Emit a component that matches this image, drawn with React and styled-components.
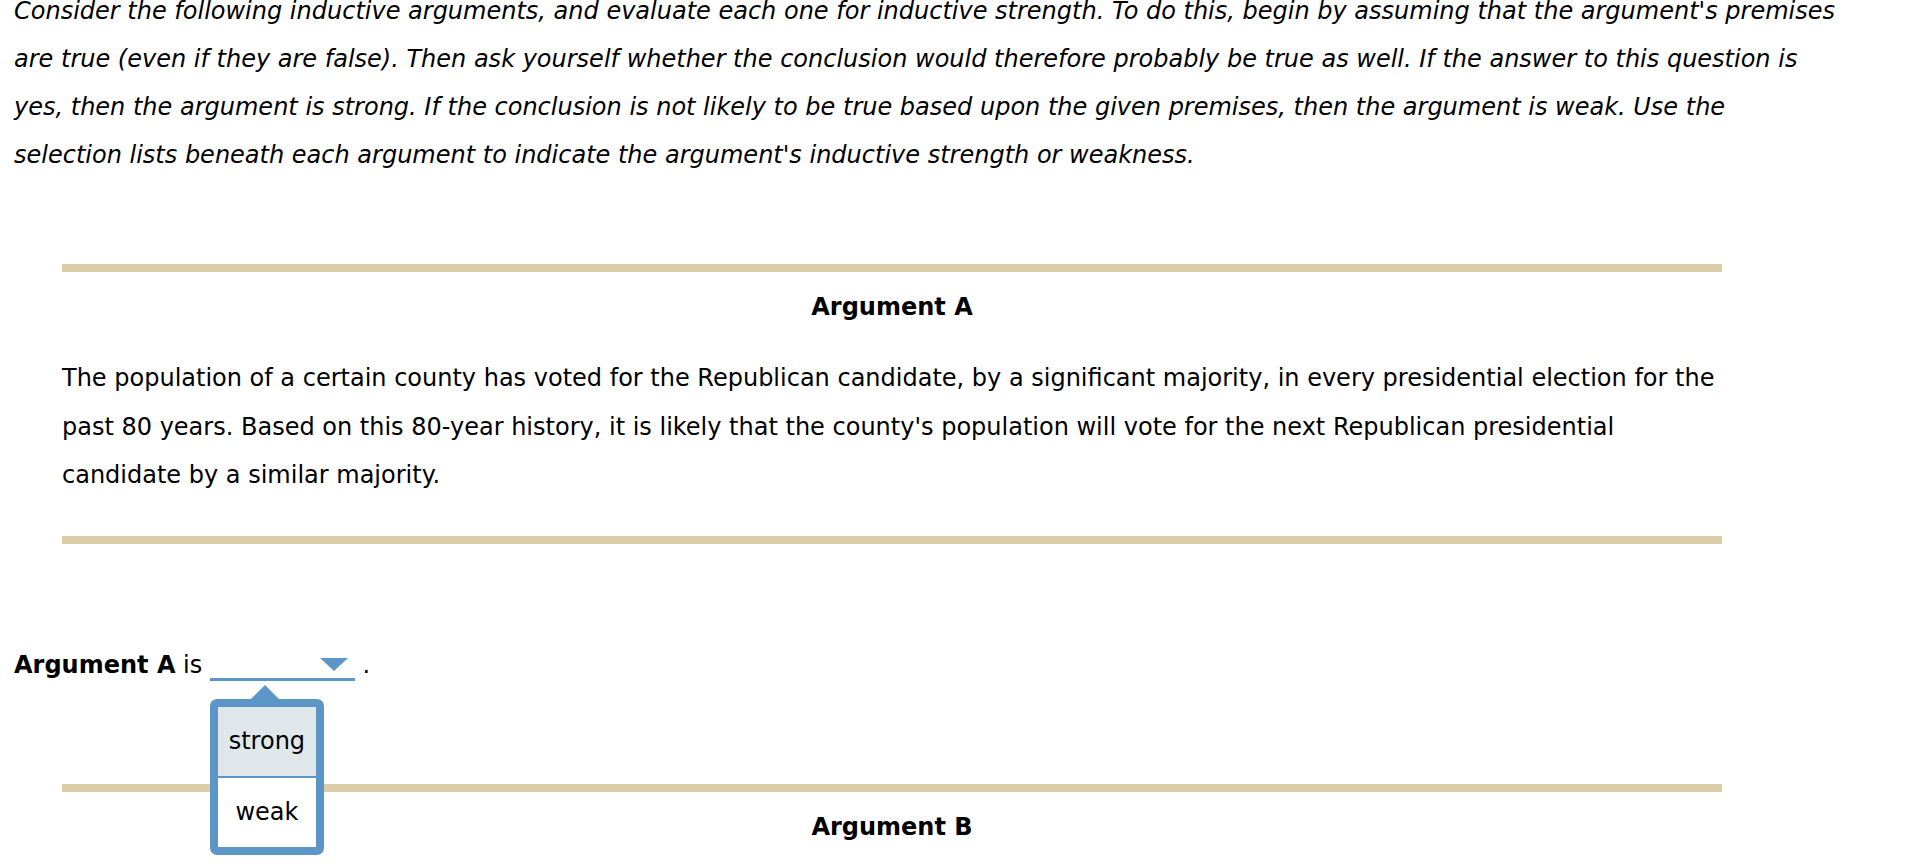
import React from 'react'
import styled, { createGlobalStyle } from 'styled-components'

const GlobalStyle = createGlobalStyle`
html {
  overflow: hidden;
}
body {
  margin: 0;
  background: #fff;
  color: #000;
  font-family: Verdana, "DejaVu Sans", sans-serif;
  font-size: 24px;
  line-height: 48px;
}
`

const Page = styled.div`
padding-left: 14px;
`

const Instructions = styled.p`
margin: -13px 0 0;
font-style: italic;
white-space: nowrap;
`

const Panel = styled.section`
margin: ${(p) => p.$gap}px 0 0 48px;
width: 1660px;
border-top: 8px solid #dbcda7;
border-bottom: 8px solid #dbcda7;
padding: 11px 0 36px;
`

const Heading = styled.h3`
margin: 0;
font-size: 24px;
font-weight: bold;
text-align: center;
line-height: 48px;
`

const Body = styled.p`
margin: 23px 0 0;
line-height: 48.5px;
`

const AnswerRow = styled.div`
margin-top: 97px;
`

const Select = styled.span`
position: relative;
display: inline-block;
width: 145px;
height: 21.5px;
border-bottom: 3px solid #5b96c6;
vertical-align: -8.5px;
`

const Caret = styled.span`
display: block;
width: 0;
height: 0;
margin: 1px 7px 0 auto;
border-top: 13px solid #5b96c6;
border-left: 14.5px solid transparent;
border-right: 14.5px solid transparent;
`

const Popup = styled.div`
position: absolute;
top: calc(100% + 7px);
left: 0;
width: 114px;
z-index: 2;
`

const Pointer = styled.div`
width: 0;
height: 0;
margin-left: 41px;
border-bottom: 14px solid #5b96c6;
border-left: 14px solid transparent;
border-right: 14px solid transparent;
`

const Menu = styled.ul`
margin: 0;
padding: 0;
list-style: none;
border: 8px solid #5b96c6;
border-radius: 7px;
background: #fff;
overflow: hidden;
`

const Option = styled.li`
height: 69px;
line-height: 69px;
text-align: center;
background: ${(p) => (p.$active ? '#dfe7ea' : '#fff')};
& + & {
  border-top: 2px solid #5b96c6;
}
`

export default function App() {
  return (
    <>
      <GlobalStyle />
      <Page>
        <Instructions>
          Consider the following inductive arguments, and evaluate each one for inductive strength. To do this,
          begin by assuming that the argument's premises
          <br />
          are true (even if they are false). Then ask yourself whether the conclusion would therefore probably be
          true as well. If the answer to this question is
          <br />
          yes, then the argument is strong. If the conclusion is not likely to be true based upon the given
          premises, then the argument is weak. Use the
          <br />
          selection lists beneath each argument to indicate the argument's inductive strength or weakness.
        </Instructions>

        <Panel $gap={85}>
          <Heading>Argument A</Heading>
          <Body>
            The population of a certain county has voted for the Republican candidate, by a significant majority,
            in every presidential election for the past 80 years. Based on this 80-year history, it is likely that
            the county's population will vote for the next Republican presidential candidate by a similar majority.
          </Body>
        </Panel>

        <AnswerRow>
          <b>Argument A</b> is{' '}
          <Select>
            <Caret />
            <Popup>
              <Pointer />
              <Menu>
                <Option $active>strong</Option>
                <Option>weak</Option>
              </Menu>
            </Popup>
          </Select>{' '}
          .
        </AnswerRow>

        <Panel $gap={95}>
          <Heading>Argument B</Heading>
        </Panel>
      </Page>
    </>
  )
}
